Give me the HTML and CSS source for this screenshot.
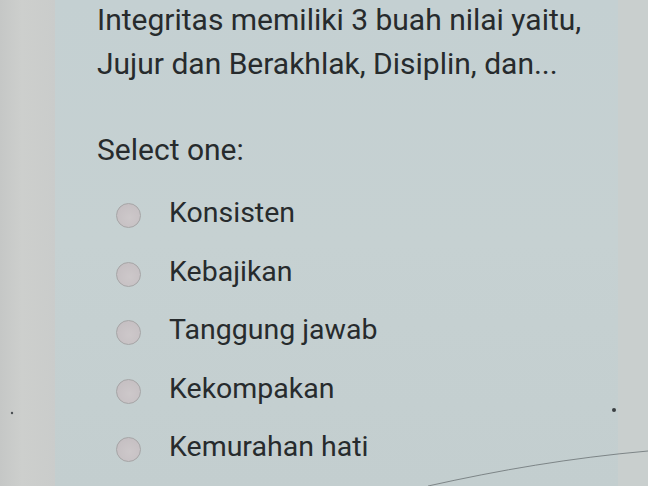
FILE: index.html
```html
<!DOCTYPE html>
<html>
<head>
<meta charset="utf-8">
<link rel="stylesheet" href="styles.css">
</head>
<body>
<div class="screen">
  <div class="edge-left"></div>
  <div class="panel">
    <div class="question">
      <p class="qline">Integritas memiliki 3 buah nilai yaitu,</p>
      <p class="qline">Jujur dan Berakhlak, Disiplin, dan...</p>
    </div>
    <p class="prompt">Select one:</p>
    <ul class="options">
      <li class="option"><span class="radio"></span><span class="label">Konsisten</span></li>
      <li class="option"><span class="radio"></span><span class="label">Kebajikan</span></li>
      <li class="option"><span class="radio"></span><span class="label">Tanggung jawab</span></li>
      <li class="option"><span class="radio"></span><span class="label">Kekompakan</span></li>
      <li class="option"><span class="radio"></span><span class="label">Kemurahan hati</span></li>
    </ul>
  </div>
  <div class="edge-right"></div>
</div>
<svg class="scratch" width="648" height="486" viewBox="0 0 648 486">
  <path d="M428 486 C 500 470, 570 458, 648 451" fill="none" stroke="#7d8587" stroke-width="1"/>
  <circle cx="614" cy="410" r="2" fill="#3a3f42"/>
  <circle cx="12" cy="413" r="1.2" fill="#4a4f52"/>
</svg>
</body>
</html>
```
FILE: styles.css
```css
html, body {
  margin: 0;
  padding: 0;
  width: 648px;
  height: 486px;
  overflow: hidden;
}
body {
  position: relative;
  background: #c9cbca;
  font-family: Roboto, "Noto Sans", sans-serif;
  color: #272b2d;
}
.screen {
  display: flex;
  height: 486px;
}
.edge-left {
  width: 55px;
  background: linear-gradient(90deg, #c5c7c6 0%, #cdcfcd 40%, #cacccb 100%);
}
.panel {
  flex: 1;
  background: linear-gradient(180deg, #c4d0d2 0%, #c6d1d2 50%, #c3cecf 100%);
  padding-left: 42px;
}
.edge-right {
  width: 30px;
  background: #c9cfce;
}
.question {
  margin-top: -2px;
}
.qline {
  margin: 0;
  font-size: 30px;
  line-height: 44px;
}
.prompt {
  margin: 47px 0 0 0;
  font-size: 30px;
  line-height: 34px;
}
.options {
  list-style: none;
  margin: 17px 0 0 0;
  padding: 0 0 0 19px;
}
.option {
  display: flex;
  align-items: center;
  height: 58.5px;
}
.radio {
  width: 23px;
  height: 23px;
  margin-top: 5px;
  border-radius: 50%;
  border: 1.5px solid #a6a5a6;
  background: radial-gradient(circle at 55% 60%, #cdc8ca 0%, #c6c0c3 70%, #bcb7ba 100%);
  flex: none;
}
.label {
  margin-left: 28px;
  font-size: 28.5px;
  line-height: 58px;
}
.scratch {
  position: absolute;
  left: 0;
  top: 0;
  pointer-events: none;
}
```
